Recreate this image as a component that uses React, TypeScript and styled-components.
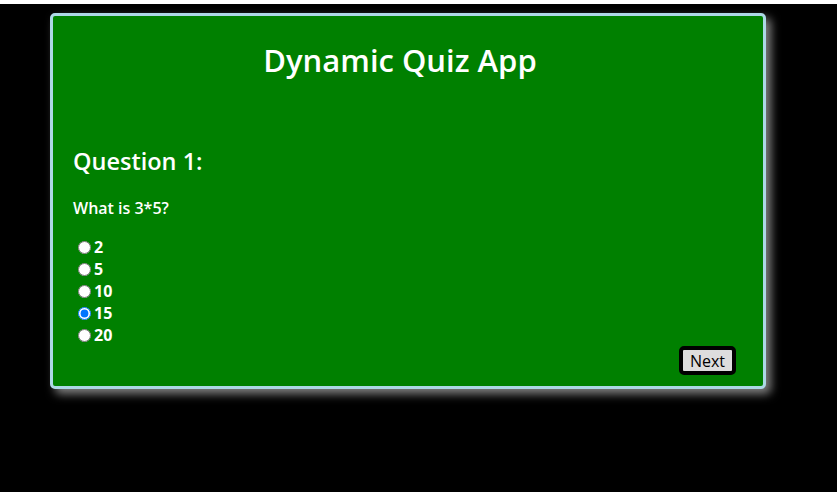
import React, { useState } from 'react';
import styled, { createGlobalStyle } from 'styled-components';

const GlobalStyle = createGlobalStyle`
  html, body {
    margin: 0;
    padding: 0;
    background: #ffffff;
  }
  body {
    padding-top: 4px;
    font-family: "Open Sans", "DejaVu Sans", sans-serif;
  }
`;

const Page = styled.div`
  min-height: calc(100vh - 4px);
  background: #000000;
  padding: 9px 0 0 50px;
  box-sizing: border-box;
`;

const Card = styled.div`
  width: 716px;
  height: 376px;
  box-sizing: border-box;
  background: green;
  border: 3px solid lightblue;
  border-radius: 5px;
  box-shadow: 5px 5px 10px gray;
  padding: 0 20px;
  color: white;
  display: flex;
  flex-direction: column;
`;

const Title = styled.h1`
  font-size: 31px;
  font-weight: 600;
  text-align: center;
  margin: 23px 0 0;
  padding-right: 16px;
`;

const QuestionTitle = styled.h2`
  font-size: 23.5px;
  font-weight: 600;
  margin: 64px 0 0;
`;

const QuestionText = styled.p`
  font-size: 16px;
  font-weight: 600;
  margin: 20px 0 17px;
`;

const Options = styled.div`
  display: flex;
  flex-direction: column;
`;

const Option = styled.label`
  font-size: 16px;
  font-weight: 700;
  line-height: 22px;
  display: flex;
  align-items: center;
`;

const Radio = styled.input`
  margin: 0 3px 0 5px;
  width: 13px;
  height: 13px;
`;

const Footer = styled.div`
  display: flex;
  justify-content: flex-end;
  margin-top: 0;
  padding-right: 7px;
`;

const NextButton = styled.button`
  font-family: "Open Sans", "DejaVu Sans", sans-serif;
  font-size: 16px;
  background: #dddddd;
  color: #000000;
  border: 4px solid #000000;
  border-radius: 5px;
  padding: 1px 7px 0;
  height: 29px;
  line-height: 20px;
  cursor: pointer;
`;

const options = ['2', '5', '10', '15', '20'];

const App = () => {
  const [selected, setSelected] = useState('15');

  return (
    <>
      <GlobalStyle />
      <Page>
        <Card>
          <Title>Dynamic Quiz App</Title>
          <QuestionTitle>Question 1:</QuestionTitle>
          <QuestionText>What is 3*5?</QuestionText>
          <Options>
            {options.map((o) => (
              <Option key={o}>
                <Radio type="radio" name="answer" value={o} checked={selected === o} onChange={() => setSelected(o)} />
                {o}
              </Option>
            ))}
          </Options>
          <Footer>
            <NextButton>Next</NextButton>
          </Footer>
        </Card>
      </Page>
    </>
  );
};

export default App;
